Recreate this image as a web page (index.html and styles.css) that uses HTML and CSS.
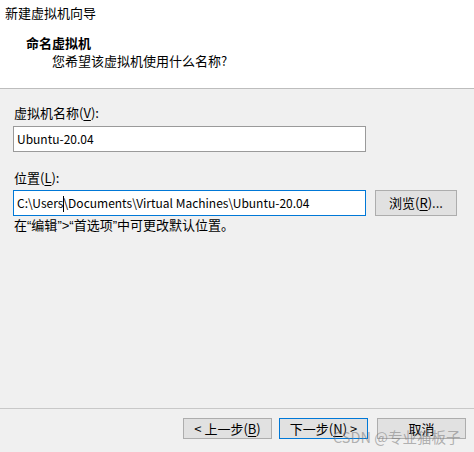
FILE: index.html
```html
<!DOCTYPE html>
<html lang="zh-CN">
<head>
<meta charset="utf-8">
<title>新建虚拟机向导</title>
<link rel="stylesheet" href="styles.css">
</head>
<body>
<div class="dialog">
  <div class="header">
    <div class="title">新建虚拟机向导</div>
    <div class="heading">命名虚拟机</div>
    <div class="subheading">您希望该虚拟机使用什么名称?</div>
  </div>
  <div class="content">
    <div class="label">虚拟机名称(<u>V</u>):</div>
    <div class="field">Ubuntu-20.04</div>
    <div class="label label-loc">位置(<u>L</u>):</div>
    <div class="row">
      <div class="field field-focus">C:\Users<span class="caret"></span>\Documents\Virtual Machines\Ubuntu-20.04</div>
      <div class="btn btn-browse">浏览(<u>R</u>)...</div>
    </div>
    <div class="hint">在<span class="q">“</span>编辑<span class="q">”&gt;“</span>首选项<span class="q">”</span>中可更改默认位置。</div>
  </div>
  <div class="footer">
    <div class="btn btn-back">&lt; 上一步(<u>B</u>)</div>
    <div class="btn btn-next">下一步(<u>N</u>) &gt;</div>
    <div class="btn btn-cancel">取消</div>
  </div>
  <div class="watermark">CSDN @专业猫板子</div>
</div>
</body>
</html>
```
FILE: styles.css
```css
html, body {
  margin: 0;
  padding: 0;
}
body {
  width: 474px;
  height: 452px;
  overflow: hidden;
  font-family: "Noto Sans CJK SC", "Liberation Sans", sans-serif;
  font-size: 13px;
  color: #000;
}
.dialog {
  position: relative;
  width: 474px;
  height: 452px;
  display: flex;
  flex-direction: column;
  background: #f0f0f0;
}
.header {
  height: 88px;
  background: #fff;
  border-bottom: 1px solid #bdbdbd;
  flex: none;
}
.title {
  height: 26px;
  line-height: 26px;
  padding-left: 5px;
}
.heading {
  margin-top: 8px;
  line-height: 18px;
  padding-left: 26px;
  font-weight: bold;
}
.subheading {
  line-height: 18px;
  padding-left: 52px;
}
.content {
  flex: 1;
  display: flex;
  flex-direction: column;
  padding: 15px 0 0 13px;
}
.label {
  line-height: 18px;
  padding-left: 1px;
}
.label-loc {
  margin-top: 17px;
}
.field {
  margin-top: 4px;
  box-sizing: border-box;
  width: 353px;
  height: 26px;
  line-height: 24px;
  padding-left: 3px;
  font-size: 12px;
  background: #fff;
  border: 1px solid #9a9a9a;
  white-space: nowrap;
  overflow: hidden;
}
.row {
  display: flex;
  align-items: flex-start;
  margin-top: 3px;
}
.row .field {
  margin-top: 0;
}
.field-focus {
  border-color: #0078d7;
}
.caret {
  display: inline-block;
  width: 1px;
  height: 16px;
  background: #000;
  vertical-align: -4px;
  margin-right: -1px;
}
.btn {
  box-sizing: border-box;
  background: #e1e1e1;
  border: 1px solid #adadad;
  text-align: center;
  white-space: nowrap;
}
.btn-browse {
  margin-left: 9px;
  width: 82px;
  height: 26px;
  line-height: 24px;
}
.hint {
  line-height: 18px;
  padding-left: 1px;
}
.q {
  font-family: "Liberation Sans", sans-serif;
}
.footer {
  flex: none;
  height: 34px;
  border-top: 1px solid #c8c8c8;
  display: flex;
  align-items: flex-start;
  padding: 9px 0 0 183px;
}
.footer .btn {
  width: 89px;
  height: 21px;
  line-height: 19px;
}
.btn-next {
  margin-left: 7px;
  border-color: #0078d7;
}
.btn-cancel {
  margin-left: 9px;
}
.watermark {
  position: absolute;
  left: 333px;
  top: 428px;
  line-height: 18px;
  font-size: 14.5px;
  color: rgba(120, 120, 120, 0.55);
  white-space: nowrap;
}
u {
  text-decoration-thickness: 1px;
  text-underline-offset: 2px;
}
```
